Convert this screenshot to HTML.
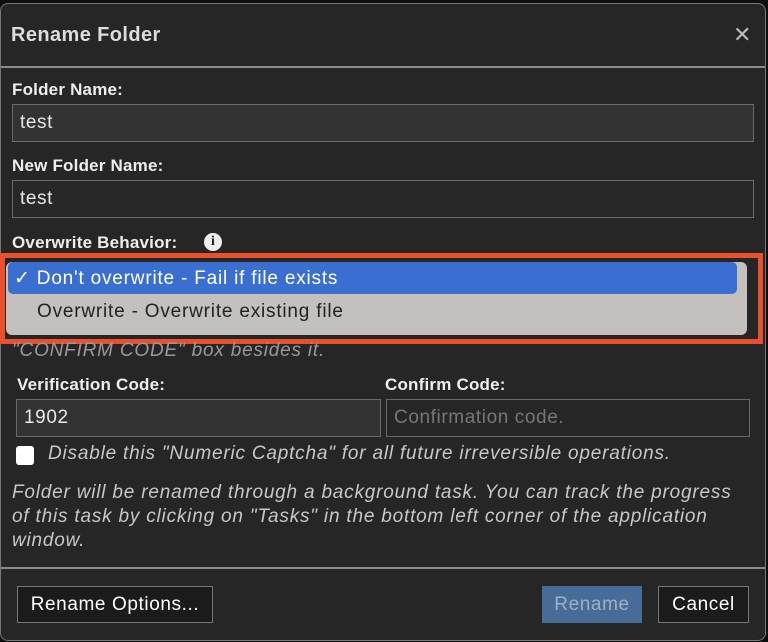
<!DOCTYPE html><html><head><style>
*{margin:0;padding:0;box-sizing:border-box}
body{width:768px;height:642px;background:#0e0e0e;position:relative;overflow:hidden;font-family:"Liberation Sans",sans-serif;color:#e8e8e8}
.a{position:absolute;white-space:nowrap}
.lbl{font-weight:bold;font-size:17px;letter-spacing:0.2px;color:#eee}
.in{position:absolute;border:1.5px solid #6a6a6a;background:#333;font-size:19px;letter-spacing:0.6px;padding-left:7px;display:flex;align-items:center}
.it{font-style:italic;font-size:19px;letter-spacing:0.8px;color:#c8c8c8}
.btn{position:absolute;border:1.5px solid #777;background:#1b1b1b;font-size:19px;letter-spacing:0.6px;display:flex;align-items:center;justify-content:center;color:#fff}
</style></head><body>
<div class="a" style="left:0;top:3px;width:766px;height:638px;background:#252625;border:1.5px solid #777;border-radius:8px"></div>
<div class="a" style="left:1px;top:66px;width:764px;height:2px;background:#8a8a8a"></div>
<div class="a" style="left:11px;top:24px;font-size:20px;letter-spacing:0.4px;font-weight:bold;color:#ddd">Rename Folder</div>
<div class="a" style="left:733px;top:22px;font-size:22px;color:#bbb">✕</div>
<div class="a lbl" style="left:12px;top:80px">Folder Name:</div>
<div class="in" style="left:12px;top:104px;width:742px;height:38px">test</div>
<div class="a lbl" style="left:12px;top:156px">New Folder Name:</div>
<div class="in" style="left:12px;top:180px;width:742px;height:38px;background:#282828">test</div>
<div class="a lbl" style="left:12px;top:233px">Overwrite Behavior:</div>
<div class="a" style="left:204px;top:233px;width:18px;height:18px;border-radius:50%;background:#eee;color:#222;font-weight:bold;font-size:14px;text-align:center;line-height:18px;font-family:'Liberation Serif',serif">i</div>
<div class="a" style="left:0;top:253px;width:763px;height:91px;border:5px solid #e8502e"></div>
<div class="a" style="left:6px;top:262px;width:741px;height:73px;background:#c3c0be;border-radius:6px"></div>
<div class="a" style="left:8px;top:262px;width:729px;height:32px;background:#3a6fd1;border-radius:5px"></div>
<div class="a" style="left:14px;top:267px;font-size:19px;letter-spacing:0.8px;color:#fff">✓ Don't overwrite - Fail if file exists</div>
<div class="a" style="left:37px;top:301px;font-size:19px;letter-spacing:0.8px;color:#222">Overwrite - Overwrite existing file</div>
<div class="a it" style="left:12px;top:340px;color:#999">"CONFIRM CODE" box besides it.</div>
<div class="a lbl" style="left:17px;top:375px">Verification Code:</div>
<div class="a lbl" style="left:385px;top:375px">Confirm Code:</div>
<div class="in" style="left:16px;top:399px;width:365px;height:38px">1902</div>
<div class="in" style="left:386px;top:399px;width:364px;height:38px;background:#252625;color:#777">Confirmation code.</div>
<div class="a" style="left:16px;top:446px;width:18px;height:19px;background:#fff;border-radius:3px"></div>
<div class="a it" style="left:48px;top:443px">Disable this "Numeric Captcha" for all future irreversible operations.</div>
<div class="a it" style="left:12px;top:481px;line-height:24px;white-space:normal;width:735px">Folder will be renamed through a background task. You can track the progress<br>of this task by clicking on "Tasks" in the bottom left corner of the application<br>window.</div>
<div class="a" style="left:1px;top:567px;width:764px;height:2px;background:#8a8a8a"></div>
<div class="btn" style="left:17px;top:586px;width:196px;height:37px">Rename Options...</div>
<div class="btn" style="left:542px;top:586px;width:100px;height:37px;background:#476c98;border-color:#476c98;color:#9fb0c4">Rename</div>
<div class="btn" style="left:658px;top:586px;width:91px;height:37px">Cancel</div>
</body></html>
